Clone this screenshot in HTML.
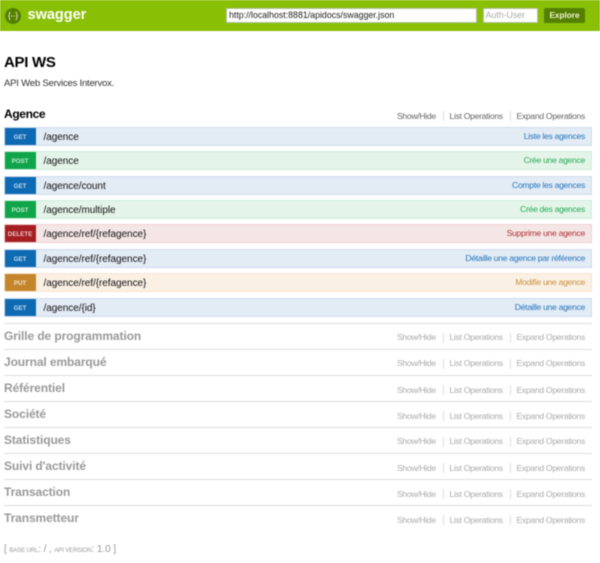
<!DOCTYPE html>
<html>
<head>
<meta charset="utf-8">
<style>
html,body{margin:0;padding:0;background:#fff;}
body{width:600px;height:563px;overflow:hidden;position:relative;font-family:"Liberation Sans",sans-serif;}
#w{position:absolute;left:0;top:0;width:600px;height:563px;filter:blur(0.4px);}
.a{position:absolute;white-space:nowrap;}
.hdr{left:0;top:0;width:600px;height:31px;background:#89bf04;}
.inp{background:#fff;border:1px solid #b8c0a8;box-sizing:border-box;font-size:8.8px;line-height:13px;}
.row{position:absolute;left:4px;width:588px;height:19px;box-sizing:border-box;border:1px solid;}
.badge{position:absolute;left:-0.5px;top:0;width:31px;height:17px;color:rgba(255,255,255,.75);font-size:6.2px;font-weight:bold;text-align:center;line-height:19px;}
.path{position:absolute;left:38.5px;top:0;font-size:10px;line-height:19px;color:#111;white-space:nowrap;letter-spacing:-.05px;}
.desc{position:absolute;right:6px;top:0;font-size:8.6px;line-height:16.5px;white-space:nowrap;letter-spacing:-.3px;opacity:.9;}
.get{background:#e3ebf5;border-color:#cfdcec;}.get .badge{background:#0f6ab4;}.get .desc{color:#0f6ab4;}
.post{background:#e4f4e9;border-color:#cdeeda;}.post .badge{background:#10a54a;}.post .desc{color:#10a54a;}
.del{background:#f5e6e6;border-color:#f0cfcf;}.del .badge{background:#a41e22;}.del .desc{color:#a41e22;}
.put{background:#faf0e4;border-color:#f6e6d2;}.put .badge{background:#c5862b;}.put .desc{color:#c5862b;}
.line{position:absolute;left:4px;width:588px;height:1px;background:#ddd;}
.t{position:absolute;left:4px;font-size:12px;font-weight:bold;color:#999;white-space:nowrap;line-height:14px;letter-spacing:-.1px;}
.op{position:absolute;font-size:8.6px;color:#aaa;white-space:nowrap;line-height:12px;letter-spacing:-.3px;}
.sep{position:absolute;width:1px;height:10px;background:#ddd;}
</style>
</head>
<body>
<div id="w">
<div class="a hdr"></div>
<svg class="a" style="left:4px;top:7px" width="18" height="18" viewBox="0 0 18 18">
<circle cx="9" cy="9" r="8" fill="#547f00"/>
<path d="M6.5 5.2C5 5.2 5.4 6.8 5.2 8C5.1 8.6 4.7 9 4.3 9C4.7 9 5.1 9.4 5.2 10C5.4 11.2 5 12.8 6.5 12.8M11.5 5.2C13 5.2 12.6 6.8 12.8 8C12.9 8.6 13.3 9 13.7 9C13.3 9 12.9 9.4 12.8 10C12.6 11.2 13 12.8 11.5 12.8" fill="none" stroke="#d5e4ac" stroke-width="1"/>
<path d="M7 9H11" stroke="#d5e4ac" stroke-width="1" stroke-dasharray="1 .7"/>
</svg>
<div class="a" style="left:27.5px;top:6px;font-size:14.5px;font-weight:bold;color:#fff;line-height:18px;">swagger</div>
<div class="a inp" style="left:226px;top:8px;width:251px;height:15px;color:#222;padding-left:2px;">http://localhost:8881/apidocs/swagger.json</div>
<div class="a inp" style="left:482.5px;top:8px;width:55px;height:15px;color:#aaa;padding-left:2px;">Auth-User</div>
<div class="a" style="left:544px;top:8px;width:41px;height:15px;background:#547f00;border-radius:2px;color:#eef3d8;font-size:8.2px;font-weight:bold;text-align:center;line-height:15.5px;">Explore</div>

<div class="a" style="left:4px;top:54px;font-size:15px;font-weight:bold;color:#000;line-height:18px;letter-spacing:-.3px;">API WS</div>
<div class="a" style="left:4px;top:77.5px;font-size:9.6px;color:#333;line-height:12px;letter-spacing:-.25px;">API Web Services Intervox.</div>
<div class="a" style="left:4px;top:107px;font-size:12px;font-weight:bold;color:#000;line-height:14px;letter-spacing:-.35px;">Agence</div>

<div class="op" style="left:397px;top:110px;color:#666">Show/Hide</div><div class="sep" style="left:443px;top:111px"></div>
<div class="op" style="left:449.5px;top:110px;color:#666">List Operations</div><div class="sep" style="left:510px;top:111px"></div>
<div class="op" style="left:516.5px;top:110px;color:#666">Expand Operations</div>

<div class="row get" style="top:127px"><div class="badge">GET</div><div class="path">/agence</div><div class="desc">Liste les agences</div></div>
<div class="row post" style="top:151px"><div class="badge">POST</div><div class="path">/agence</div><div class="desc">Crée une agence</div></div>
<div class="row get" style="top:176px"><div class="badge">GET</div><div class="path">/agence/count</div><div class="desc">Compte les agences</div></div>
<div class="row post" style="top:200px"><div class="badge">POST</div><div class="path">/agence/multiple</div><div class="desc">Crée des agences</div></div>
<div class="row del" style="top:224px"><div class="badge">DELETE</div><div class="path">/agence/ref/{refagence}</div><div class="desc">Supprime une agence</div></div>
<div class="row get" style="top:249px"><div class="badge">GET</div><div class="path">/agence/ref/{refagence}</div><div class="desc">Détaille une agence par référence</div></div>
<div class="row put" style="top:273px"><div class="badge">PUT</div><div class="path">/agence/ref/{refagence}</div><div class="desc">Modifie une agence</div></div>
<div class="row get" style="top:298px"><div class="badge">GET</div><div class="path">/agence/{id}</div><div class="desc">Détaille une agence</div></div>

<div class="line" style="top:323px"></div>
<div class="t" style="top:329px">Grille de programmation</div>
<div class="op" style="left:397px;top:331px">Show/Hide</div><div class="sep" style="left:443px;top:333px"></div><div class="op" style="left:449.5px;top:331px">List Operations</div><div class="sep" style="left:510px;top:333px"></div><div class="op" style="left:516.5px;top:331px">Expand Operations</div>

<div class="line" style="top:349px"></div>
<div class="t" style="top:355px">Journal embarqué</div>
<div class="op" style="left:397px;top:357px">Show/Hide</div><div class="sep" style="left:443px;top:359px"></div><div class="op" style="left:449.5px;top:357px">List Operations</div><div class="sep" style="left:510px;top:359px"></div><div class="op" style="left:516.5px;top:357px">Expand Operations</div>

<div class="line" style="top:375px"></div>
<div class="t" style="top:381px">Référentiel</div>
<div class="op" style="left:397px;top:384px">Show/Hide</div><div class="sep" style="left:443px;top:385px"></div><div class="op" style="left:449.5px;top:384px">List Operations</div><div class="sep" style="left:510px;top:385px"></div><div class="op" style="left:516.5px;top:384px">Expand Operations</div>

<div class="line" style="top:401px"></div>
<div class="t" style="top:407px">Société</div>
<div class="op" style="left:397px;top:410px">Show/Hide</div><div class="sep" style="left:443px;top:411px"></div><div class="op" style="left:449.5px;top:410px">List Operations</div><div class="sep" style="left:510px;top:411px"></div><div class="op" style="left:516.5px;top:410px">Expand Operations</div>

<div class="line" style="top:427px"></div>
<div class="t" style="top:433px">Statistiques</div>
<div class="op" style="left:397px;top:435px">Show/Hide</div><div class="sep" style="left:443px;top:437px"></div><div class="op" style="left:449.5px;top:435px">List Operations</div><div class="sep" style="left:510px;top:437px"></div><div class="op" style="left:516.5px;top:435px">Expand Operations</div>

<div class="line" style="top:453px"></div>
<div class="t" style="top:459px">Suivi d'activité</div>
<div class="op" style="left:397px;top:462px">Show/Hide</div><div class="sep" style="left:443px;top:463px"></div><div class="op" style="left:449.5px;top:462px">List Operations</div><div class="sep" style="left:510px;top:463px"></div><div class="op" style="left:516.5px;top:462px">Expand Operations</div>

<div class="line" style="top:479px"></div>
<div class="t" style="top:485px">Transaction</div>
<div class="op" style="left:397px;top:488px">Show/Hide</div><div class="sep" style="left:443px;top:489px"></div><div class="op" style="left:449.5px;top:488px">List Operations</div><div class="sep" style="left:510px;top:489px"></div><div class="op" style="left:516.5px;top:488px">Expand Operations</div>

<div class="line" style="top:505px"></div>
<div class="t" style="top:511px">Transmetteur</div>
<div class="op" style="left:397px;top:514px">Show/Hide</div><div class="sep" style="left:443px;top:515px"></div><div class="op" style="left:449.5px;top:514px">List Operations</div><div class="sep" style="left:510px;top:515px"></div><div class="op" style="left:516.5px;top:514px">Expand Operations</div>

<div class="a" style="left:4px;top:542.5px;font-size:10px;color:#999;line-height:13px;letter-spacing:-.1px;">[ <span style="font-size:6px;">BASE URL</span>: / , <span style="font-size:6px;">API VERSION</span>: 1.0 ]</div>
</div>
</body>
</html>
